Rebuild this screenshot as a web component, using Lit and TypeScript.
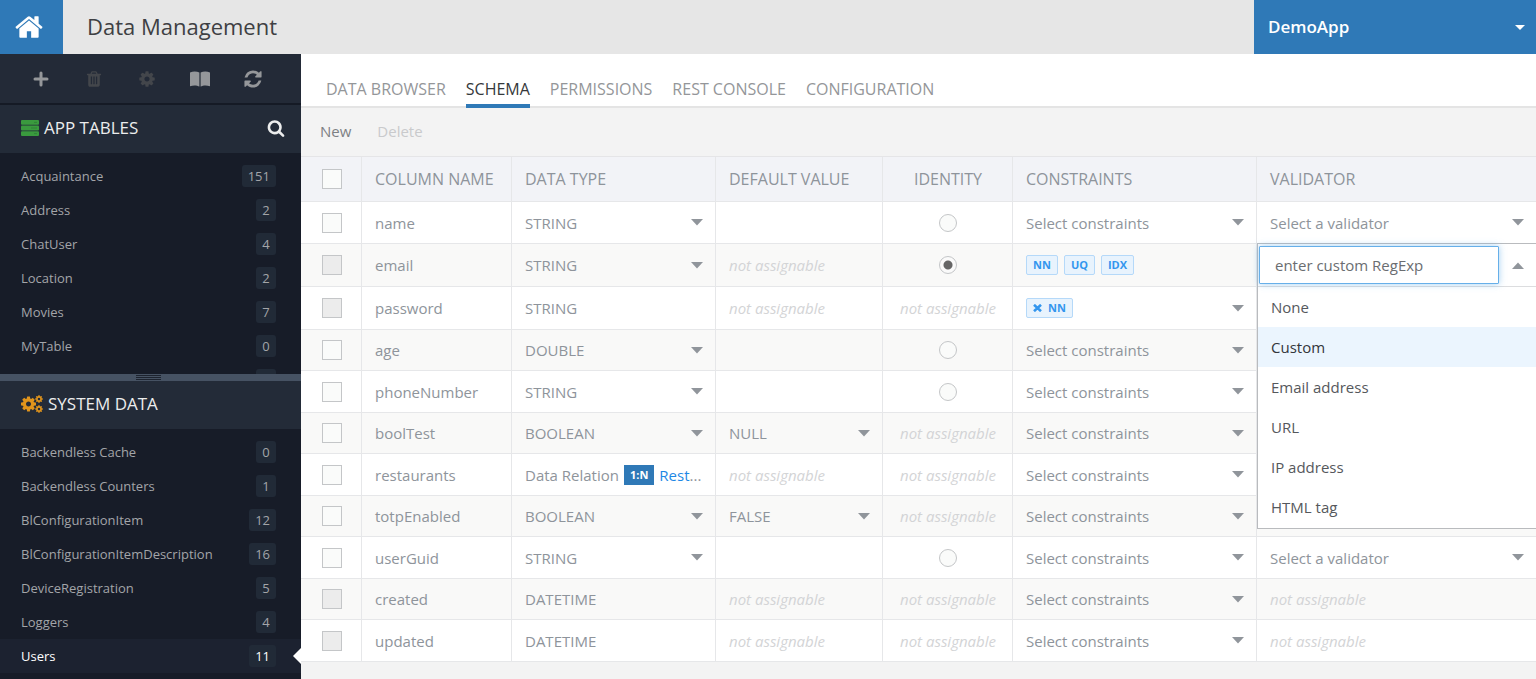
import { LitElement, html, svg, css, nothing } from "lit";
import { customElement, state } from "lit/decorators.js";
import { classMap } from "lit/directives/class-map.js";

const COG =
  "M1152 896q0-106-75-181t-181-75-181 75-75 181 75 181 181 75 181-75 75-181zm512-109v222q0 12-8 23t-20 13l-185 28q-19 54-39 91 35 50 107 138 10 12 10 25t-9 23q-27 37-99 108t-94 71q-12 0-26-9l-138-108q-44 23-91 38-16 136-29 186-7 28-36 28h-222q-14 0-24.5-8.5t-11.5-21.5l-28-184q-49-16-90-37l-141 107q-10 9-25 9-14 0-25-11-126-114-165-168-7-10-7-23 0-12 8-23 15-21 51-66.5t54-70.5q-27-50-41-99l-183-27q-13-2-21-12.5t-8-23.5v-222q0-12 8-23t19-13l186-28q14-46 39-92-40-57-107-138-10-12-10-24 0-10 9-23 26-36 98.5-107.5t94.5-71.5q13 0 26 10l138 107q44-23 91-38 16-136 29-186 7-28 36-28h222q14 0 24.5 8.5t11.5 21.5l28 184q49 16 90 37l142-107q9-9 24-9 13 0 25 10 129 119 165 170 7 8 7 22 0 12-8 23-15 21-51 66.5t-54 70.5q26 50 41 98l183 28q13 2 21 12.5t8 23.5z";

const HOME =
  "M1472 992v480q0 26-19 45t-45 19h-384v-384h-256v384h-384q-26 0-45-19t-19-45v-480q0-1 .5-3t.5-3l575-474 575 474q1 2 1 6zm223-69l-62 74q-8 9-21 11h-3q-13 0-21-7l-692-577-692 577q-12 8-24 7-13-2-21-11l-62-74q-8-10-7-23.5t11-21.5l719-599q32-26 76-26t76 26l244 204v-195q0-14 9-23t23-9h192q14 0 23 9t9 23v408l219 182q10 8 11 21.5t-7 23.5z";

const TRASH =
  "M704 1376v-704q0-14-9-23t-23-9h-64q-14 0-23 9t-9 23v704q0 14 9 23t23 9h64q14 0 23-9t9-23zm256 0v-704q0-14-9-23t-23-9h-64q-14 0-23 9t-9 23v704q0 14 9 23t23 9h64q14 0 23-9t9-23zm256 0v-704q0-14-9-23t-23-9h-64q-14 0-23 9t-9 23v704q0 14 9 23t23 9h64q14 0 23-9t9-23zm-544-992h448l-48-117q-7-9-17-11h-317q-10 2-17 11zm928 32v64q0 14-9 23t-23 9h-96v948q0 83-47 143.5t-113 60.5h-832q-66 0-113-58.5t-47-141.5v-952h-96q-14 0-23-9t-9-23v-64q0-14 9-23t23-9h309l70-167q15-37 54-63t79-26h320q40 0 79 26t54 63l70 167h309q14 0 23 9t9 23z";

const REFRESH =
  "M1639 1056q0 5-1 7-64 268-268 434.5t-478 166.5q-146 0-282.5-55t-243.5-157l-129 129q-19 19-45 19t-45-19-19-45v-448q0-26 19-45t45-19h448q26 0 45 19t19 45-19 45l-137 137q71 66 161 102t187 36q134 0 250-65t186-179q11-17 53-117 8-23 30-23h192q13 0 22.5 9.5t9.5 22.5zm25-800v448q0 26-19 45t-45 19h-448q-26 0-45-19t-19-45 19-45l138-138q-148-137-349-137-134 0-250 65t-186 179q-11 17-53 117-8 23-30 23h-199q-13 0-22.5-9.5t-9.5-22.5v-7q65-268 270-434.5t480-166.5q146 0 284 55.5t245 156.5l130-129q19-19 45-19t45 19 19 45z";

const SEARCH =
  "M1216 832q0-185-131.5-316.5t-316.5-131.5-316.5 131.5-131.5 316.5 131.5 316.5 316.5 131.5 316.5-131.5 131.5-316.5zm512 832q0 52-38 90t-90 38q-54 0-90-38l-343-342q-179 124-399 124-143 0-273.5-55.5t-225-150-150-225-55.5-273.5 55.5-273.5 150-225 225-150 273.5-55.5 273.5 55.5 225 150 150 225 55.5 273.5q0 220-124 399l343 343q37 37 37 90z";

const glyph = (d: string, size: number) => html`
  <svg width=${size} height=${size} viewBox="0 0 1792 1792" fill="currentColor" aria-hidden="true">
    <path d=${d}></path>
  </svg>
`;

const plusIcon = html`
  <svg width="16" height="16" viewBox="0 0 16 16" fill="none" stroke="currentColor" stroke-width="3" stroke-linecap="round" aria-hidden="true">
    <path d="M8 2v12M2 8h12"></path>
  </svg>
`;

const bookIcon = html`
  <svg width="20" height="16" viewBox="0 0 20 16" fill="currentColor" aria-hidden="true">
    <path d="M0 1.4C3.400 .2 7 .4 9.400 1.600V15.600C7 14.200 3.400 14 0 15.200Z"></path>
    <path d="M20 1.400C16.600 .2 13 .4 10.600 1.600V15.600C13 14.200 16.600 14 20 15.200Z"></path>
  </svg>
`;

const tablesIcon = html`
  <svg width="18" height="16" viewBox="0 0 18 16" fill="#3a9a3e" aria-hidden="true">
    <rect x="0" y="0" width="18" height="4.800" rx="1"></rect>
    <rect x="0" y="5.600" width="18" height="4.800" rx="1"></rect>
    <rect x="0" y="11.200" width="18" height="4.800" rx="1"></rect>
    <path d="M13 2.400h3M10 8h6M13 13.600h3" stroke="#2f8235" stroke-width="1"></path>
  </svg>
`;

const cogAt = (cx: number, cy: number, size: number) => {
  const k = size / 1536;
  return svg`<path d=${COG} transform="translate(${cx} ${cy}) scale(${k}) translate(-896 -896)"></path>`;
};

const cogsIcon = html`
  <svg width="22" height="18" viewBox="0 0 22 18" fill="#e0941c" aria-hidden="true">
    ${cogAt(7.5, 9, 15)}${cogAt(18, 4, 7.5)}${cogAt(18, 14, 7.5)}
  </svg>
`;

const caret = (up = false) => html`
  <svg class="caret" width="12" height="7" viewBox="0 0 12 7" fill="currentColor" aria-hidden="true">
    <path d=${up ? "M0 7L6 0.500L12 7Z" : "M0 0H12L6 6.500Z"}></path>
  </svg>
`;

interface Entry {
  name: string;
  count: string;
}

type Validator = "select" | "editor" | "na" | "none";

interface Column {
  name: string;
  type: string;
  fixedType?: boolean;
  relation?: string;
  value?: string;
  identity: "off" | "on" | "na";
  chips?: string[];
  removable?: boolean;
  locked?: boolean;
  validator: Validator;
}

const NA = "not assignable";

const APP_TABLES: Entry[] = [
  { name: "Acquaintance", count: "151" },
  { name: "Address", count: "2" },
  { name: "ChatUser", count: "4" },
  { name: "Location", count: "2" },
  { name: "Movies", count: "7" },
  { name: "MyTable", count: "0" },
  { name: "", count: "" },
];

const SYSTEM_TABLES: Entry[] = [
  { name: "Backendless Cache", count: "0" },
  { name: "Backendless Counters", count: "1" },
  { name: "BlConfigurationItem", count: "12" },
  { name: "BlConfigurationItemDescription", count: "16" },
  { name: "DeviceRegistration", count: "5" },
  { name: "Loggers", count: "4" },
  { name: "Users", count: "11" },
];

const TABS = ["DATA BROWSER", "SCHEMA", "PERMISSIONS", "REST CONSOLE", "CONFIGURATION"];

const COLUMNS: Column[] = [
  { name: "name", type: "STRING", identity: "off", validator: "select" },
  { name: "email", type: "STRING", value: NA, identity: "on", chips: ["NN", "UQ", "IDX"], locked: true, validator: "editor" },
  { name: "password", type: "STRING", fixedType: true, value: NA, identity: "na", chips: ["NN"], removable: true, locked: true, validator: "none" },
  { name: "age", type: "DOUBLE", identity: "off", validator: "none" },
  { name: "phoneNumber", type: "STRING", identity: "off", validator: "none" },
  { name: "boolTest", type: "BOOLEAN", value: "NULL", identity: "na", validator: "none" },
  { name: "restaurants", type: "Data Relation", relation: "Rest", value: NA, identity: "na", validator: "none" },
  { name: "totpEnabled", type: "BOOLEAN", value: "FALSE", identity: "na", validator: "none" },
  { name: "userGuid", type: "STRING", identity: "off", validator: "select" },
  { name: "created", type: "DATETIME", fixedType: true, value: NA, identity: "na", locked: true, validator: "na" },
  { name: "updated", type: "DATETIME", fixedType: true, value: NA, identity: "na", locked: true, validator: "na" },
];

const VALIDATORS = ["None", "Custom", "Email address", "URL", "IP address", "HTML tag"];

const base = css`
  :host {
    display: block;
    font-family: "Open Sans", "Noto Sans", sans-serif;
  }
  *,
  *::before,
  *::after {
    box-sizing: border-box;
  }
  button,
  select,
  input {
    font: inherit;
    color: inherit;
    margin: 0;
  }
  button {
    border: 0;
    padding: 0;
    background: none;
    cursor: pointer;
  }
  a {
    color: inherit;
    text-decoration: none;
  }
  svg {
    display: block;
  }
`;

@customElement("side-bar")
export class SideBar extends LitElement {
  static styles = [
    base,
    css`
      :host {
        display: flex;
        flex-direction: column;
        min-height: 0;
        background: #171c28;
        color: #a3a5a9;
        font-size: 13px;
      }
      .tools {
        display: flex;
        flex: none;
        height: 51px;
        padding-left: 14px;
        background: #232a37;
        border-bottom: 2px solid #151a25;
      }
      .tool {
        display: grid;
        place-items: center;
        width: 53px;
        color: #95979a;
      }
      .tool:disabled {
        color: #43464b;
      }
      .heading {
        display: flex;
        flex: none;
        align-items: center;
        height: 48px;
        padding: 0 16px 2px 21px;
        gap: 5px;
        background: #232b38;
        color: #eceded;
      }
      .heading h2 {
        flex: 1;
        margin: 0;
        font-size: 17px;
        font-weight: 400;
        line-height: 22px;
      }
      .list {
        flex: 1;
        min-height: 0;
        margin: 0;
        padding: 6px 0 0;
        list-style: none;
        overflow: hidden;
      }
      .list.sized {
        flex: none;
        height: 221px;
      }
      .item {
        position: relative;
        display: flex;
        align-items: center;
        justify-content: space-between;
        height: 34px;
        padding: 0 25px 0 21px;
      }
      .count {
        min-width: 20px;
        height: 22px;
        padding: 0 6px;
        border-radius: 3px;
        background: #212a37;
        line-height: 22px;
        text-align: center;
      }
      .item.current {
        background: #1c2230;
        color: #fff;
      }
      .item.current::after {
        content: "";
        position: absolute;
        right: 0;
        top: 9px;
        border: 8px solid transparent;
        border-left-width: 0;
        border-right-color: #fff;
      }
      .splitter {
        display: flex;
        flex: none;
        justify-content: center;
        height: 7px;
        padding-right: 4px;
        background: #465263;
      }
      .grip {
        width: 25px;
        margin: 1px 0;
        background: repeating-linear-gradient(#1d232f 0 1px, #465263 1px 2px);
      }
    `,
  ];

  private entries(list: Entry[], sized = false) {
    return html`
      <ul class=${classMap({ list: true, sized })}>
        ${list.map(
          (e) => html`
            <li>
              <a class=${classMap({ item: true, current: e.name === "Users" })} href="#">
                <span>${e.name}</span><span class="count">${e.count}</span>
              </a>
            </li>
          `
        )}
      </ul>
    `;
  }

  render() {
    return html`
      <div class="tools">
        <button class="tool" type="button" aria-label="Add table">${plusIcon}</button>
        <button class="tool" type="button" aria-label="Delete table" disabled>${glyph(TRASH, 18)}</button>
        <button class="tool" type="button" aria-label="Table settings" disabled>${glyph(COG, 18)}</button>
        <button class="tool" type="button" aria-label="Documentation">${bookIcon}</button>
        <button class="tool" type="button" aria-label="Refresh">${glyph(REFRESH, 20)}</button>
      </div>
      <div class="heading">
        ${tablesIcon}
        <h2>APP TABLES</h2>
        <button type="button" aria-label="Search tables">${glyph(SEARCH, 18)}</button>
      </div>
      ${this.entries(APP_TABLES, true)}
      <div class="splitter"><span class="grip"></span></div>
      <div class="heading">
        ${cogsIcon}
        <h2>SYSTEM DATA</h2>
      </div>
      ${this.entries(SYSTEM_TABLES)}
    `;
  }
}

@customElement("schema-table")
export class SchemaTable extends LitElement {
  @state() private validator = "Custom";

  static styles = [
    base,
    css`
      :host {
        color: #8e949b;
        font-size: 15px;
        line-height: 20px;
      }
      .grid {
        width: 100%;
        table-layout: fixed;
        border-collapse: separate;
        border-spacing: 0;
        border-top: 1px solid #e5e5e7;
        background: #fff;
      }
      .c-check {
        width: 61px;
      }
      .c-name {
        width: 150px;
      }
      .c-type {
        width: 204px;
      }
      .c-value {
        width: 167px;
      }
      .c-identity {
        width: 130px;
      }
      .c-constraints {
        width: 244px;
      }
      th,
      td {
        height: 42px;
        padding: 0 12px 0 13px;
        border-right: 1px solid #e6e7e9;
        border-bottom: 1px solid #e6e7e9;
        text-align: left;
        white-space: nowrap;
      }
      th:last-child,
      td:last-child {
        border-right: 0;
      }
      th {
        height: 45px;
        background: #f2f3f7;
        font-size: 16px;
        font-weight: 400;
      }
      .even td {
        height: 41px;
        background: #f9f9f8;
      }
      .tagged td {
        height: 43px;
      }
      th.center,
      td.center {
        text-align: center;
      }
      .box,
      .dot {
        display: block;
        appearance: none;
        width: 20px;
        height: 20px;
        margin: 0 auto;
        border: 1px solid #c4c6c8;
        background: #fafbfa;
      }
      .box:disabled {
        background: #ececec;
      }
      .dot {
        width: 18px;
        height: 18px;
        border-radius: 50%;
      }
      .dot:checked {
        background: radial-gradient(circle, #666 0 4px, #fafafa 5px);
      }
      .na {
        color: #d3d4d6;
        font-style: italic;
      }
      .picker {
        display: grid;
        align-items: center;
      }
      .picker > * {
        grid-area: 1 / 1;
      }
      .picker select {
        appearance: none;
        width: 100%;
        padding: 0 16px 0 0;
        border: 0;
        border-radius: 0;
        background: none;
        outline: 0;
      }
      .picker .caret {
        justify-self: end;
        pointer-events: none;
      }
      .caret {
        color: #90959b;
      }
      .relation {
        display: flex;
        align-items: center;
      }
      .ratio {
        margin: 0 5px;
        padding: 0 6px;
        background: #2f79b7;
        color: #fff;
        font-size: 11px;
        font-weight: 700;
      }
      .relation a {
        color: #1e88e5;
      }
      .chips {
        display: flex;
        align-items: center;
        gap: 6px;
      }
      .chip {
        display: inline-flex;
        align-items: center;
        gap: 6px;
        height: 20px;
        padding: 0 6px;
        border: 1px solid #b5d9f9;
        border-radius: 2px;
        background: #e8f3fd;
        color: #3396ee;
        font-size: 11px;
        font-weight: 700;
      }
      .chips .open {
        margin-left: auto;
      }
      td.host {
        position: relative;
      }
      .popup {
        position: absolute;
        z-index: 2;
        top: -1px;
        left: 0;
        right: 0;
        border: 1px solid #b9bbbe;
        border-right: 0;
        background: #fff;
        color: #55585c;
      }
      .combo {
        display: flex;
        align-items: center;
        height: 43px;
        padding: 0 12px 0 1px;
        gap: 13px;
        border-bottom: 1px solid #dcdddf;
      }
      .regexp {
        flex: 1;
        min-width: 0;
        height: 38px;
        padding: 0 15px;
        border: 1px solid #66afe9;
        border-radius: 1px;
        outline: 0;
        background: #fff;
        box-shadow: 0 0 7px rgba(102, 175, 233, 0.6);
      }
      .regexp::placeholder {
        color: #6a6d71;
        opacity: 1;
      }
      .options {
        margin: 0;
        padding: 0 0 1px;
        list-style: none;
      }
      .option {
        height: 40px;
        padding: 0 13px;
        line-height: 40px;
      }
      .option.active {
        background: #ebf5fe;
        color: #33363a;
      }
    `,
  ];

  private picker(value: string, label: string) {
    return html`
      <div class="picker">
        <select aria-label=${label}>
          <option>${value}</option>
        </select>
        ${caret()}
      </div>
    `;
  }

  private type(c: Column) {
    if (c.relation)
      return html`<div class="relation">
        ${c.type}<span class="ratio">1:N</span><a href="#">${c.relation}</a>...
      </div>`;
    return c.fixedType ? c.type : this.picker(c.type, `Data type of ${c.name}`);
  }

  private value(c: Column) {
    if (!c.value) return nothing;
    return c.value === NA ? html`<span class="na">${NA}</span>` : this.picker(c.value, `Default value of ${c.name}`);
  }

  private identity(c: Column) {
    return c.identity === "na"
      ? html`<span class="na">${NA}</span>`
      : html`<input class="dot" type="radio" name="identity" aria-label="Identity: ${c.name}" ?checked=${c.identity === "on"} />`;
  }

  private constraints(c: Column) {
    if (!c.chips) return this.picker("Select constraints", `Constraints of ${c.name}`);
    return html`
      <div class="chips">
        ${c.chips.map(
          (chip) => html`<span class="chip">
            ${c.removable
              ? html`<button type="button" aria-label="Remove ${chip}">
                  <svg width="9" height="8" viewBox="0 0 9 8" stroke="currentColor" stroke-width="2.600" aria-hidden="true">
                    <path d="M1 .8L8 7.200M8 .8L1 7.200"></path>
                  </svg>
                </button>`
              : nothing}${chip}
          </span>`
        )}
        ${c.removable ? html`<button class="open" type="button" aria-label="Constraints of ${c.name}">${caret()}</button>` : nothing}
      </div>
    `;
  }

  private validatorCell(c: Column) {
    switch (c.validator) {
      case "select":
        return this.picker("Select a validator", `Validator of ${c.name}`);
      case "na":
        return html`<span class="na">${NA}</span>`;
      case "editor":
        return html`
          <div class="popup">
            <div class="combo">
              <input class="regexp" type="text" placeholder="enter custom RegExp" aria-label="Custom validator" />
              <button type="button" aria-label="Close validators">${caret(true)}</button>
            </div>
            <ul class="options" role="listbox">
              ${VALIDATORS.map(
                (v) => html`<li
                  class=${classMap({ option: true, active: v === this.validator })}
                  role="option"
                  @click=${() => (this.validator = v)}
                >
                  ${v}
                </li>`
              )}
            </ul>
          </div>
        `;
      default:
        return nothing;
    }
  }

  render() {
    return html`
      <table class="grid">
        <colgroup>
          <col class="c-check" />
          <col class="c-name" />
          <col class="c-type" />
          <col class="c-value" />
          <col class="c-identity" />
          <col class="c-constraints" />
          <col />
        </colgroup>
        <thead>
          <tr>
            <th><input class="box" type="checkbox" aria-label="All columns" /></th>
            <th>COLUMN NAME</th>
            <th>DATA TYPE</th>
            <th>DEFAULT VALUE</th>
            <th class="center">IDENTITY</th>
            <th>CONSTRAINTS</th>
            <th>VALIDATOR</th>
          </tr>
        </thead>
        <tbody>
          ${COLUMNS.map(
            (c, i) => html`
              <tr class=${classMap({ even: i % 2 === 1, tagged: !!c.chips })}>
                <td><input class="box" type="checkbox" aria-label=${c.name} ?disabled=${!!c.locked} /></td>
                <td>${c.name}</td>
                <td>${this.type(c)}</td>
                <td>${this.value(c)}</td>
                <td class="center">${this.identity(c)}</td>
                <td>${this.constraints(c)}</td>
                <td class=${classMap({ host: c.validator === "editor" })}>${this.validatorCell(c)}</td>
              </tr>
            `
          )}
        </tbody>
      </table>
    `;
  }
}

@customElement("app-root")
export class AppRoot extends LitElement {
  @state() private tab = "SCHEMA";

  static styles = [
    base,
    css`
      :host {
        display: grid;
        grid-template: 54px minmax(0, 1fr) / 301px minmax(0, 1fr);
        height: 100vh;
        overflow: hidden;
        background: #f3f3f3;
      }
      .top {
        grid-column: 1 / -1;
        display: flex;
        align-items: stretch;
        background: #e6e6e6;
      }
      .home {
        display: grid;
        place-items: center;
        width: 63px;
        padding-right: 5px;
        background: #2f79b7;
        color: #fff;
      }
      .title {
        flex: 1;
        align-self: center;
        margin: 0;
        padding: 0 0 2px 24px;
        color: #3e4043;
        font-size: 22px;
        font-weight: 400;
        line-height: 30px;
      }
      .app {
        display: grid;
        align-items: center;
        width: 282px;
        background: #2f79b7;
        color: #fff;
      }
      .app > * {
        grid-area: 1 / 1;
      }
      .app select {
        appearance: none;
        width: 100%;
        height: 100%;
        padding: 0 32px 2px 14px;
        border: 0;
        border-radius: 0;
        background: none;
        font-size: 17px;
        font-weight: 600;
      }
      .app svg {
        justify-self: end;
        margin-right: 11px;
        pointer-events: none;
      }
      .main {
        min-width: 0;
        overflow: hidden;
      }
      .tabs {
        display: flex;
        height: 54px;
        padding-left: 25px;
        gap: 20px;
        background: #fff;
        box-shadow: inset 0 -2px #e4e4e4;
        font-size: 16px;
        line-height: 22px;
        color: #949699;
      }
      .tab {
        padding-top: 24px;
        border-bottom: 4px solid transparent;
      }
      .tab.current {
        border-color: #2f79b7;
        color: #35383b;
      }
      .actions {
        display: flex;
        align-items: center;
        height: 48px;
        padding: 0 0 2px 19px;
        gap: 26px;
        color: #7d8084;
        font-size: 15px;
      }
      .actions button:disabled {
        color: #c9cacc;
      }
    `,
  ];

  render() {
    return html`
      <header class="top">
        <a class="home" href="#" aria-label="Home">${glyph(HOME, 30)}</a>
        <h1 class="title">Data Management</h1>
        <div class="app">
          <select aria-label="Application">
            <option>DemoApp</option>
          </select>
          <svg width="10" height="5" viewBox="0 0 10 5" fill="currentColor" aria-hidden="true">
            <path d="M0 0H10L5 5Z"></path>
          </svg>
        </div>
      </header>
      <side-bar></side-bar>
      <main class="main">
        <nav class="tabs">
          ${TABS.map(
            (t) => html`<a class=${classMap({ tab: true, current: t === this.tab })} href="#" @click=${() => (this.tab = t)}>${t}</a>`
          )}
        </nav>
        <div class="actions">
          <button type="button">New</button>
          <button type="button" disabled>Delete</button>
        </div>
        <schema-table></schema-table>
      </main>
    `;
  }
}
